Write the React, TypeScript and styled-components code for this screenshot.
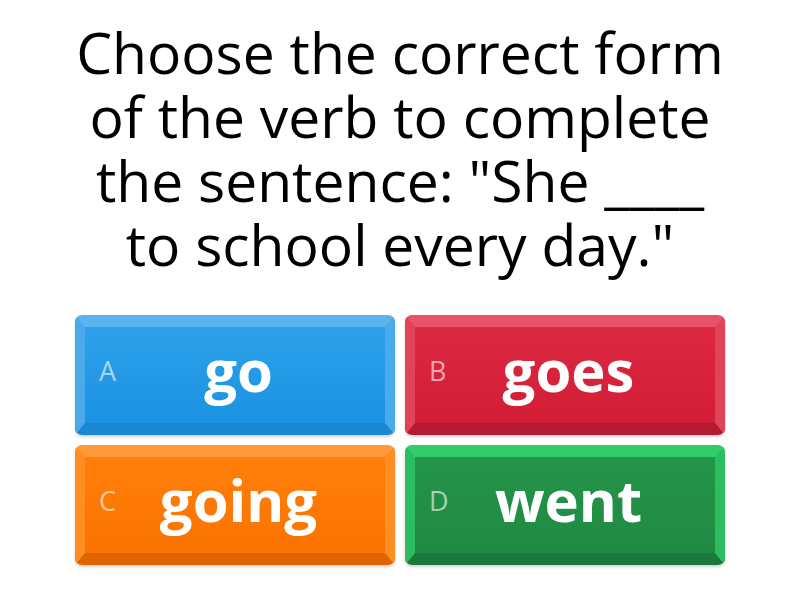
import React from 'react';
import styled, { createGlobalStyle } from 'styled-components';

const GlobalStyle = createGlobalStyle`
  body {
    margin: 0;
    background: #ffffff;
    font-family: 'Open Sans', 'Noto Sans', sans-serif;
  }
`;

const Page = styled.div`
  width: 800px;
  height: 600px;
  display: flex;
  flex-direction: column;
  align-items: center;
  box-sizing: border-box;
  padding-top: 20px;
`;

const Question = styled.h1`
  margin: 0;
  width: 655px;
  font-size: 57px;
  line-height: 64px;
  font-weight: 400;
  color: #000;
  text-align: center;
`;

const Grid = styled.div`
  margin-top: 39px;
  display: grid;
  grid-template-columns: 320px 320px;
  grid-auto-rows: 120px;
  gap: 10px;
`;

const palettes = {
  blue: { top: '#5cb4ef', side: '#4aaaec', bottom: '#1b86d2', from: '#2da1ea', to: '#1b93e2' },
  red: { top: '#e75469', side: '#e2425a', bottom: '#b41a30', from: '#dc2840', to: '#d11d35' },
  orange: { top: '#ff9a3a', side: '#ff8d22', bottom: '#e06300', from: '#ff7f0a', to: '#fb7300' },
  green: { top: '#33cc6a', side: '#2bbd5f', bottom: '#1b7a3b', from: '#249449', to: '#208a43' },
};

type Tone = keyof typeof palettes;

const Answer = styled.button<{ $tone: Tone }>`
  position: relative;
  box-sizing: border-box;
  width: 320px;
  height: 120px;
  padding: 0 0 0 7px;
  border-style: solid;
  border-width: 12px 10px 12px 10px;
  border-color: ${(p) => palettes[p.$tone].top} ${(p) => palettes[p.$tone].side}
    ${(p) => palettes[p.$tone].bottom} ${(p) => palettes[p.$tone].side};
  border-radius: 7px;
  background: linear-gradient(
    ${(p) => palettes[p.$tone].from},
    ${(p) => palettes[p.$tone].to}
  );
  box-shadow: 0 2px 3px rgba(0, 0, 0, 0.18);
  display: flex;
  align-items: center;
  justify-content: center;
  font-family: 'Open Sans', 'Noto Sans', sans-serif;
  cursor: pointer;
`;

const Letter = styled.span`
  position: absolute;
  left: 14px;
  top: 50%;
  transform: translateY(-62%);
  font-size: 27px;
  color: rgba(255, 255, 255, 0.6);
`;

const Word = styled.span`
  font-size: 58px;
  font-weight: 700;
  color: #fff;
  line-height: 1;
  margin-top: -10px;
`;

const answers: { letter: string; word: string; tone: Tone }[] = [
  { letter: 'A', word: 'go', tone: 'blue' },
  { letter: 'B', word: 'goes', tone: 'red' },
  { letter: 'C', word: 'going', tone: 'orange' },
  { letter: 'D', word: 'went', tone: 'green' },
];

export default function App() {
  return (
    <Page>
      <GlobalStyle />
      <Question>
        Choose the correct form of the verb to complete the sentence: "She ____
        to school every day."
      </Question>
      <Grid>
        {answers.map((a) => (
          <Answer key={a.letter} $tone={a.tone}>
            <Letter>{a.letter}</Letter>
            <Word>{a.word}</Word>
          </Answer>
        ))}
      </Grid>
    </Page>
  );
}
